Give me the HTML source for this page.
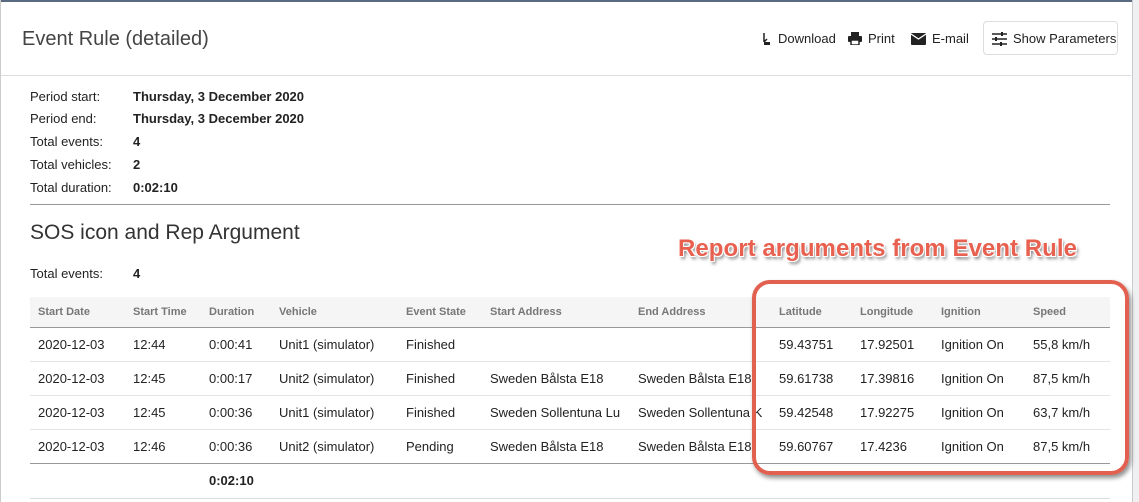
<!DOCTYPE html><html><head><meta charset="utf-8"><style>
*{box-sizing:border-box;margin:0;padding:0}
body{width:1139px;height:502px;overflow:hidden;background:#fff;font-family:"Liberation Sans",Arial,sans-serif;color:#222;position:relative}
.top{position:absolute;left:0;top:0;width:1139px;height:2px;background:#5a6a80}
.lb{position:absolute;left:0;top:0;width:1px;height:502px;background:#ccc}
.rb{position:absolute;right:0;top:0;width:7px;height:502px;background:#eef0f2;border-left:1px solid #ccc}
.hdr{position:absolute;left:0;top:0;width:1131px;height:76px;border-bottom:1px solid #ddd}
h1{position:absolute;left:22px;top:28px;font-size:20px;font-weight:normal;color:#444}
.act{position:absolute;top:31px;font-size:13px;color:#222;display:flex;align-items:center;gap:6px}
.btn{position:absolute;left:983px;top:21px;width:135px;height:34px;border:1px solid #ddd;border-radius:4px}
.s{position:absolute;font-size:13px}
.b{font-weight:bold}
table{position:absolute;left:30px;top:297px;width:1080px;border-collapse:collapse;font-size:13px;table-layout:fixed}
th{background:#f5f5f5;height:30px;text-align:left;font-size:11px;color:#777;font-weight:bold;padding-left:8px;border-bottom:1px solid #999}
td{height:34px;padding-left:8px;border-bottom:1px solid #e3e3e3;white-space:nowrap;overflow:hidden}
tr.l td{border-bottom:1px solid #999}
tr.t td{height:35px;border-bottom:1px solid #ddd}
.box{position:absolute;left:752px;top:280px;width:377px;height:195px;border:4px solid #e2604f;border-radius:18px;box-shadow:2px 3px 5px rgba(0,0,0,.45)}
.ann{position:absolute;left:678px;top:235px;font-size:24px;font-weight:bold;color:#e8604f;letter-spacing:0.05px;text-shadow:-1px -1px 0 #fff,1px -1px 0 #fff,-1px 1px 0 #fff,1px 1px 0 #fff,2px 3px 3px rgba(0,0,0,.5)}
</style></head><body>
<div class="hdr"></div><div class="top"></div><div class="lb"></div><div class="rb"></div>
<h1>Event Rule (detailed)</h1>
<div class="act" style="left:762px"><svg width="10" height="14" viewBox="0 0 10 14"><path d="M2 1v9M2 10l3-3" stroke="#222" stroke-width="1.5" fill="none"/><rect x="2" y="10" width="6" height="3" fill="#222"/></svg>Download</div>
<div class="act" style="left:848px"><svg width="14" height="13" viewBox="0 0 14 13"><rect x="3" y="0" width="8" height="4" fill="#222"/><rect x="0" y="4" width="14" height="6" rx="1" fill="#222"/><rect x="3" y="8" width="8" height="5" fill="#fff" stroke="#222" stroke-width="1.5"/></svg>Print</div>
<div class="act" style="left:911px"><svg width="15" height="12" viewBox="0 0 15 12"><rect x="0" y="0" width="15" height="12" rx="1" fill="#222"/><path d="M0 1l7.5 5L15 1" stroke="#fff" stroke-width="1.3" fill="none"/></svg>E-mail</div>
<div class="btn"></div>
<div class="act" style="left:992px"><svg width="15" height="14" viewBox="0 0 15 14"><path d="M0 2h15M0 7h15M0 12h15" stroke="#222" stroke-width="1.5"/><path d="M10 0v4M4 5v4M9 10v4" stroke="#222" stroke-width="2"/></svg>Show Parameters</div>
<div class="s" style="left:30px;top:89px">Period start:</div><div class="s b" style="left:133px;top:89px">Thursday, 3 December 2020</div>
<div class="s" style="left:30px;top:111px">Period end:</div><div class="s b" style="left:133px;top:111px">Thursday, 3 December 2020</div>
<div class="s" style="left:30px;top:134px">Total events:</div><div class="s b" style="left:133px;top:134px">4</div>
<div class="s" style="left:30px;top:157px">Total vehicles:</div><div class="s b" style="left:133px;top:157px">2</div>
<div class="s" style="left:30px;top:180px">Total duration:</div><div class="s b" style="left:133px;top:180px">0:02:10</div>
<div style="position:absolute;left:30px;top:204px;width:1080px;height:1px;background:#999"></div>
<div class="s" style="left:30px;top:221px;font-size:21px;color:#333">SOS icon and Rep Argument</div>
<div class="s" style="left:30px;top:266px">Total events:</div><div class="s b" style="left:133px;top:266px">4</div>
<table>
<colgroup><col style="width:95px"><col style="width:76px"><col style="width:70px"><col style="width:127px"><col style="width:84px"><col style="width:148px"><col style="width:141px"><col style="width:81px"><col style="width:81px"><col style="width:92px"><col style="width:85px"></colgroup>
<tr><th>Start Date</th><th>Start Time</th><th>Duration</th><th>Vehicle</th><th>Event State</th><th>Start Address</th><th>End Address</th><th>Latitude</th><th>Longitude</th><th>Ignition</th><th>Speed</th></tr>
<tr><td>2020-12-03</td><td>12:44</td><td>0:00:41</td><td>Unit1 (simulator)</td><td>Finished</td><td></td><td></td><td>59.43751</td><td>17.92501</td><td>Ignition On</td><td>55,8 km/h</td></tr>
<tr><td>2020-12-03</td><td>12:45</td><td>0:00:17</td><td>Unit2 (simulator)</td><td>Finished</td><td>Sweden Bålsta E18</td><td>Sweden Bålsta E18</td><td>59.61738</td><td>17.39816</td><td>Ignition On</td><td>87,5 km/h</td></tr>
<tr><td>2020-12-03</td><td>12:45</td><td>0:00:36</td><td>Unit1 (simulator)</td><td>Finished</td><td>Sweden Sollentuna Lu</td><td>Sweden Sollentuna K</td><td>59.42548</td><td>17.92275</td><td>Ignition On</td><td>63,7 km/h</td></tr>
<tr class="l"><td>2020-12-03</td><td>12:46</td><td>0:00:36</td><td>Unit2 (simulator)</td><td>Pending</td><td>Sweden Bålsta E18</td><td>Sweden Bålsta E18</td><td>59.60767</td><td>17.4236</td><td>Ignition On</td><td>87,5 km/h</td></tr>
<tr class="t"><td></td><td></td><td class="b">0:02:10</td><td></td><td></td><td></td><td></td><td></td><td></td><td></td><td></td></tr>
</table>
<div class="box"></div>
<div class="ann">Report arguments from Event Rule</div>
</body></html>
